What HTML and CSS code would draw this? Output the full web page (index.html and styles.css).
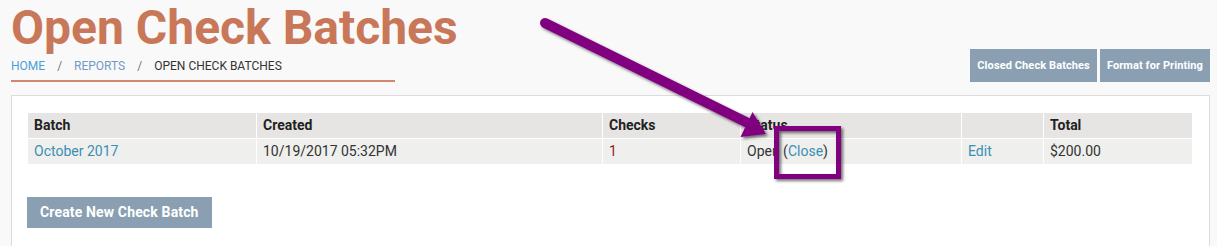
FILE: index.html
```html
<!DOCTYPE html>
<html>
<head>
<meta charset="utf-8">
<link rel="stylesheet" href="styles.css">
</head>
<body>
<div class="page">
  <header class="header">
    <div class="heading">
      <h1 class="title">Open Check Batches</h1>
      <nav class="crumbs">
        <a class="crumb home" href="#">HOME</a>
        <span class="sep">/</span>
        <a class="crumb reports" href="#">REPORTS</a>
        <span class="sep">/</span>
        <span class="current">OPEN CHECK BATCHES</span>
      </nav>
    </div>
    <div class="actions">
      <a class="btn small" href="#">Closed Check Batches</a>
      <a class="btn small" href="#">Format for Printing</a>
    </div>
  </header>
  <section class="panel">
    <table class="grid">
      <colgroup>
        <col class="c1"><col class="c2"><col class="c3"><col class="c4"><col class="c5"><col class="c6">
      </colgroup>
      <thead>
        <tr><th>Batch</th><th>Created</th><th>Checks</th><th>Status</th><th></th><th>Total</th></tr>
      </thead>
      <tbody>
        <tr>
          <td><a class="link" href="#">October 2017</a></td>
          <td>10/19/2017 05:32PM</td>
          <td class="count">1</td>
          <td>Open (<a class="link" href="#">Close</a>)</td>
          <td><a class="link" href="#">Edit</a></td>
          <td>$200.00</td>
        </tr>
      </tbody>
    </table>
    <a class="btn big" href="#">Create New Check Batch</a>
  </section>
</div>
<svg class="annot" width="1217" height="246" viewBox="0 0 1217 246">
  <defs>
    <filter id="sh" x="-20%" y="-20%" width="140%" height="140%">
      <feDropShadow dx="2" dy="2" stdDeviation="1.5" flood-color="#000" flood-opacity="0.55"/>
    </filter>
  </defs>
  <g filter="url(#sh)">
    <line x1="545" y1="23" x2="750" y2="124" stroke="#800080" stroke-width="10" stroke-linecap="round"/>
    <polygon points="766,134 740.5,137 752.5,112" fill="#800080"/>
    <rect x="776.5" y="128.5" width="62" height="48" fill="none" stroke="#800080" stroke-width="5"/>
  </g>
</svg>
</body>
</html>
```
FILE: styles.css
```css
html, body {
  margin: 0;
  padding: 0;
}
body {
  background: #f9f9f9;
  font-family: Roboto, "Liberation Sans", sans-serif;
  color: #222;
  width: 1217px;
  height: 246px;
  overflow: hidden;
  position: relative;
}
a { text-decoration: none; }

.header {
  display: flex;
  justify-content: space-between;
  align-items: flex-end;
  padding: 0 7px 0 11px;
}
.title {
  margin: 4px 0 0 0;
  font-size: 48px;
  line-height: 48px;
  font-weight: 700;
  color: #c87858;
  letter-spacing: 0;
}
.crumbs {
  margin-top: 6px;
  width: 384px;
  font-size: 12px;
  line-height: 16px;
  padding-bottom: 6px;
  border-bottom: 2px solid #d4876a;
  display: flex;
}
.crumb.home { color: #4a9fd6; }
.crumb.reports { color: #6f9cc6; }
.sep { color: #777; margin: 0 12px; }
.current { color: #333; }

.actions {
  display: flex;
  gap: 3px;
}
.btn {
  background: #8aa0b2;
  color: #fff;
  font-weight: 700;
  display: inline-block;
}
.btn.small {
  font-size: 11px;
  line-height: 33px;
  padding: 0 7px;
  letter-spacing: 0.1px;
}
.btn.big {
  font-size: 14px;
  line-height: 31px;
  padding: 0 13px;
  margin-left: -1px;
  letter-spacing: 0.15px;
}

.panel {
  margin: 13px 7px 0 11px;
  background: #fff;
  border: 1px solid #dcdcdc;
  padding: 17px 17px 24px 16px;
}
.grid {
  table-layout: fixed;
  width: 1164px;
  border-collapse: separate;
  border-spacing: 0;
  font-size: 14px;
  line-height: 20px;
  margin-bottom: 33px;
}
.c1 { width: 228px; }
.c2 { width: 346px; }
.c3 { width: 138px; }
.c4 { width: 221px; }
.c5 { width: 82px; }
.c6 { width: 149px; }
.grid th, .grid td {
  padding: 2px 6px 3px;
  text-align: left;
  white-space: nowrap;
}
.grid th {
  background: #e6e5e3;
  font-weight: 700;
  color: #222;
}
.grid td {
  background: #efefed;
  color: #333;
  border-top: 1px solid #fff;
}
.grid th + th, .grid td + td {
  border-left: 1px solid #fff;
}
.link { color: #3a8fb5; }
.grid .count { color: #8b1c1c; }

.annot {
  position: absolute;
  top: 0;
  left: 0;
  pointer-events: none;
}
```
